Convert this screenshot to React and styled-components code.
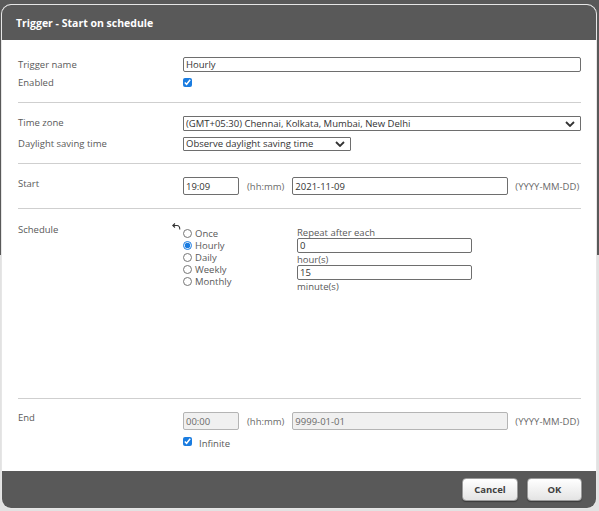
import React from "react";
import styled, { createGlobalStyle } from "styled-components";

const GlobalStyle = createGlobalStyle`
  html, body {
    margin: 0;
    padding: 0;
  }
  body {
    width: 599px;
    height: 511px;
    overflow: hidden;
    background: linear-gradient(#595959 0, #595959 50%, #e2e2e2 50%);
    font-family: "Open Sans", "Liberation Sans", sans-serif;
  }
`;

const Dialog = styled.div`
  margin: 4px 2px 0 1px;
  height: 503px;
  border: 1px solid #e6e6e6;
  border-radius: 10px;
  overflow: hidden;
  background: #fff;
  display: flex;
  flex-direction: column;
`;

const Header = styled.div`
  height: 35px;
  flex: none;
  background: #595959;
  display: flex;
  align-items: center;
  padding-left: 14px;
`;

const Title = styled.h1`
  margin: 0;
  font-size: 10.5px;
  font-weight: 700;
  color: #fff;
`;

const Body = styled.div`
  flex: 1;
  padding: 0 15px 0 16px;
  display: flex;
  flex-direction: column;
`;

const Section = styled.div`
  box-sizing: border-box;
  display: grid;
  grid-template-columns: 165px 1fr;
  row-gap: ${(p) => p.$gap || 6}px;
  padding-top: ${(p) => p.$top}px;
  padding-bottom: ${(p) => p.$bottom}px;
  border-bottom: ${(p) => (p.$last ? "none" : "1px solid #cfcfcf")};
  flex: ${(p) => (p.$grow ? 1 : "none")};
  height: ${(p) => (p.$h ? `${p.$h}px` : "auto")};
  align-content: start;
`;

const Label = styled.div`
  font-size: 9.5px;
  color: #595959;
  line-height: 11px;
  height: ${(p) => (p.$h ? `${p.$h}px` : "auto")};
  padding-top: ${(p) => p.$pt || 0}px;
`;

const Field = styled.div`
  display: flex;
  align-items: center;
  height: ${(p) => (p.$h ? `${p.$h}px` : "auto")};
`;

const TextInput = styled.input`
  display: block;
  box-sizing: border-box;
  width: ${(p) => p.$w || "100%"};
  height: ${(p) => p.$h || 15}px;
  margin: 0;
  padding: 0 2px;
  border: 1px solid ${(p) => (p.disabled ? "#b4b4b4" : "#6e6e6e")};
  border-radius: 2px;
  background: ${(p) => (p.disabled ? "#f0f0f0" : "#fff")};
  font-family: "Open Sans", "Liberation Sans", sans-serif;
  font-size: 9.5px;
  color: ${(p) => (p.disabled ? "#6a6a6a" : "#333")};
  outline: none;
`;

const Unit = styled.span`
  font-size: 9.5px;
  color: #6a6a6a;
  white-space: nowrap;
  margin: 0 ${(p) => p.$r || 0}px 0 ${(p) => p.$l || 0}px;
`;

const SelectWrap = styled.div`
  position: relative;
  width: ${(p) => p.$w};
  height: ${(p) => p.$h}px;
`;

const Select = styled.select`
  display: block;
  appearance: none;
  box-sizing: border-box;
  width: 100%;
  height: 100%;
  margin: 0;
  padding: 0 0 0 2px;
  border: 1px solid #6e6e6e;
  border-radius: 1px;
  background: #fff;
  font-family: "Open Sans", "Liberation Sans", sans-serif;
  font-size: 9.5px;
  line-height: 12px;
  color: #333;
  outline: none;
`;

const Chevron = styled.svg`
  position: absolute;
  right: 6px;
  top: 50%;
  margin-top: -3px;
  pointer-events: none;
`;

const Check = styled.input`
  display: block;
  width: 9px;
  height: 9px;
  margin: 0;
  accent-color: #1a7ce0;
`;

const ScheduleGrid = styled.div`
  display: flex;
  padding-top: 18px;
`;

const Radios = styled.div`
  position: relative;
  width: 114px;
  display: flex;
  flex-direction: column;
`;

const Undo = styled.svg`
  position: absolute;
  left: -11px;
  top: -4px;
`;

const RadioRow = styled.label`
  display: flex;
  align-items: center;
  gap: 3px;
  height: 12px;
  font-size: 9.5px;
  color: #595959;
`;

const Radio = styled.input`
  width: 9px;
  height: 9px;
  margin: 0;
  accent-color: #1a7ce0;
`;

const Repeat = styled.div`
  display: flex;
  flex-direction: column;
  width: 175px;
`;

const SmallText = styled.div`
  font-size: 9.5px;
  color: #595959;
  line-height: 11px;
  padding-top: ${(p) => p.$pt || 0}px;
`;

const EndBlock = styled.div`
  display: flex;
  flex-direction: column;
  gap: 7px;
`;

const InfiniteRow = styled.label`
  display: flex;
  align-items: center;
  gap: 7px;
  height: 9px;
  font-size: 9.5px;
  color: #595959;
  span {
    position: relative;
    top: 2px;
  }
`;

const Footer = styled.div`
  height: 37px;
  flex: none;
  background: #595959;
  display: flex;
  justify-content: flex-end;
  align-items: center;
  gap: 9px;
  padding-right: 14px;
`;

const Button = styled.button`
  width: ${(p) => p.$w}px;
  height: 23px;
  border: 1px solid #9a9a9a;
  border-radius: 4px;
  background: linear-gradient(#ffffff, #e4e4e4);
  box-shadow: 0 1px 1px rgba(0, 0, 0, 0.35);
  font-family: "Open Sans", "Liberation Sans", sans-serif;
  font-size: 9.5px;
  font-weight: 700;
  color: #404040;
  padding: 0;
`;

const ChevronIcon = () => (
  <Chevron width="10" height="6" viewBox="0 0 10 6">
    <path d="M1 1 L5 5 L9 1" fill="none" stroke="#333" strokeWidth="1.8" />
  </Chevron>
);

export default function App() {
  const options = ["Once", "Hourly", "Daily", "Weekly", "Monthly"];
  return (
    <>
      <GlobalStyle />
      <Dialog>
        <Header>
          <Title>Trigger - Start on schedule</Title>
        </Header>
        <Body>
          <Section $top={17} $bottom={15} $gap={5}>
            <Label $pt={2}>Trigger name</Label>
            <Field $h={15}>
              <TextInput defaultValue="Hourly" />
            </Field>
            <Label $h={10}>Enabled</Label>
            <Field $h={10}>
              <Check type="checkbox" defaultChecked />
            </Field>
          </Section>

          <Section $top={13} $bottom={12} $gap={6}>
            <Label $pt={1}>Time zone</Label>
            <SelectWrap $w="100%" $h={15}>
              <Select defaultValue="ist">
                <option value="ist">(GMT+05:30) Chennai, Kolkata, Mumbai, New Delhi</option>
              </Select>
              <ChevronIcon />
            </SelectWrap>
            <Label $pt={1}>Daylight saving time</Label>
            <SelectWrap $w="168px" $h={14}>
              <Select defaultValue="observe">
                <option value="observe">Observe daylight saving time</option>
              </Select>
              <ChevronIcon />
            </SelectWrap>
          </Section>

          <Section $top={13} $bottom={13}>
            <Label $pt={1}>Start</Label>
            <Field>
              <TextInput $w="56px" $h={18} defaultValue="19:09" />
              <Unit $l={8} $r={8}>(hh:mm)</Unit>
              <TextInput $w="216px" $h={18} defaultValue="2021-11-09" />
              <Unit $l={7}>(YYYY-MM-DD)</Unit>
            </Field>
          </Section>

          <Section $top={0} $bottom={0} $grow>
            <Label $pt={15}>Schedule</Label>
            <ScheduleGrid>
              <Radios>
                <Undo width="9" height="7" viewBox="0 0 9 7">
                  <path
                    d="M3 0.5 L0.8 2.5 L3 4.5 M0.8 2.5 H5 Q7.8 2.5 7.8 6.5"
                    fill="none"
                    stroke="#333"
                    strokeWidth="1.1"
                  />
                </Undo>
                {options.map((o) => (
                  <RadioRow key={o}>
                    <Radio type="radio" name="sched" defaultChecked={o === "Hourly"} />
                    {o}
                  </RadioRow>
                ))}
              </Radios>
              <Repeat>
                <SmallText>Repeat after each</SmallText>
                <TextInput $h={15} defaultValue="0" />
                <SmallText $pt={1}>hour(s)</SmallText>
                <TextInput $h={15} defaultValue="15" />
                <SmallText $pt={1}>minute(s)</SmallText>
              </Repeat>
            </ScheduleGrid>
          </Section>

          <Section $top={13} $bottom={0} $last $h={72}>
            <Label $pt={0}>End</Label>
            <EndBlock>
              <Field>
                <TextInput $w="56px" $h={18} defaultValue="00:00" disabled />
                <Unit $l={8} $r={8}>(hh:mm)</Unit>
                <TextInput $w="216px" $h={18} defaultValue="9999-01-01" disabled />
                <Unit $l={7}>(YYYY-MM-DD)</Unit>
              </Field>
              <InfiniteRow>
                <Check type="checkbox" defaultChecked />
                <span>Infinite</span>
              </InfiniteRow>
            </EndBlock>
          </Section>
        </Body>
        <Footer>
          <Button $w={56}>Cancel</Button>
          <Button $w={55}>OK</Button>
        </Footer>
      </Dialog>
    </>
  );
}
